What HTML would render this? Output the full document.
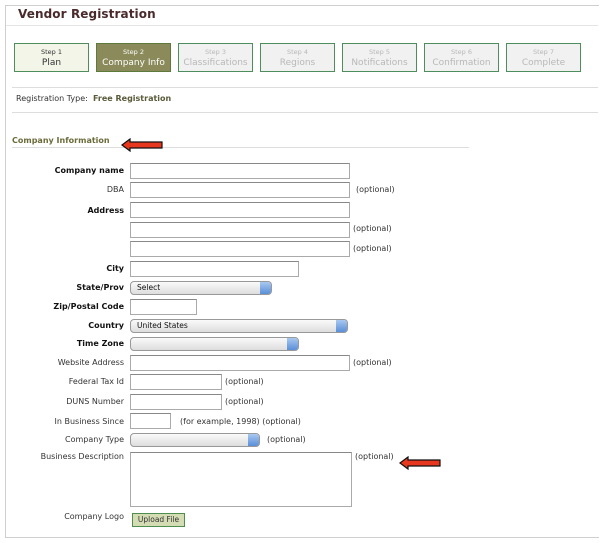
<!DOCTYPE html><html><head><style>
body{margin:0;width:604px;height:543px;background:#fff;font-family:"DejaVu Sans","Liberation Sans",sans-serif;position:relative;overflow:hidden}
.a{position:absolute;white-space:nowrap}
.frame{position:absolute;left:5px;top:5px;width:593px;height:531px;border:1px solid #cfcfcf;border-right:none}
.hl{position:absolute;height:1px;background:#ddd}
.st{position:absolute;top:43px;width:75px;height:29px;border:1px solid #4e8d5c;background:#f1f1f1;color:#b8b8b8;text-align:center;font-size:9px;box-sizing:border-box}
.st .s{font-size:6.5px;margin-top:4px;line-height:9px}
.st .n{line-height:12px}
.lb{position:absolute;right:480px;font-size:8px;color:#333;text-align:right;white-space:nowrap}
.b{font-weight:bold;color:#111}
.in{position:absolute;left:130px;height:16px;border:1px solid #aaa;border-top-color:#888;box-sizing:border-box;background:#fff}
.sel{position:absolute;left:130px;height:14px;border:1px solid #999;border-radius:4px;box-sizing:border-box;background:linear-gradient(#fafafa,#ddd);font-size:7.5px;padding-left:6px;line-height:12px;color:#111}
.sel:after{content:"";position:absolute;right:0;top:0;width:11px;height:12px;background:linear-gradient(#a8c8f0,#5a8fd8);border-radius:0 3px 3px 0}
.op{position:absolute;font-size:8px;color:#333;white-space:nowrap}
</style></head><body>
<div class="frame"></div>
<div class="a" style="left:18px;top:7px;font-size:12px;font-weight:bold;color:#4a2a2a;letter-spacing:0.1px">Vendor Registration</div>
<div class="hl" style="left:6px;top:25px;width:592px;background:#e4e4e4"></div>
<div class="st" style="left:14px;background:#f3f5e9;color:#333"><div class="s">Step 1</div><div class="n">Plan</div></div>
<div class="st" style="left:96px;background:#8a8a5a;color:#fff;border-color:#5d7a3d"><div class="s">Step 2</div><div class="n">Company Info</div></div>
<div class="st" style="left:178px"><div class="s">Step 3</div><div class="n">Classifications</div></div>
<div class="st" style="left:260px"><div class="s">Step 4</div><div class="n">Regions</div></div>
<div class="st" style="left:342px"><div class="s">Step 5</div><div class="n">Notifications</div></div>
<div class="st" style="left:424px"><div class="s">Step 6</div><div class="n">Confirmation</div></div>
<div class="st" style="left:506px"><div class="s">Step 7</div><div class="n">Complete</div></div>
<div class="hl" style="left:12px;top:87px;width:586px"></div>
<div class="a" style="left:16px;top:94px;font-size:8px;color:#333">Registration Type:&nbsp; <b style="color:#5a5a3a">Free Registration</b></div>
<div class="hl" style="left:12px;top:112px;width:586px"></div>
<div class="a" style="left:12px;top:136px;font-size:8px;font-weight:bold;color:#6b6b3b">Company Information</div>
<div class="hl" style="left:12px;top:147px;width:457px"></div>
<svg class="a" style="left:121px;top:138px" width="42" height="14"><path d="M1 7 L9 1 L9 4 L41 4 L41 10 L9 10 L9 13 Z" fill="#e8371f" stroke="#111" stroke-width="1.2"/></svg>
<svg class="a" style="left:399px;top:456px" width="42" height="14"><path d="M1 7 L9 1 L9 4 L41 4 L41 10 L9 10 L9 13 Z" fill="#e8371f" stroke="#111" stroke-width="1.2"/></svg>

<div class="lb b" style="top:166px">Company name</div><div class="in" style="top:163px;width:220px"></div>
<div class="lb" style="top:185px">DBA</div><div class="in" style="top:182px;width:220px"></div><div class="op" style="left:356px;top:185px">(optional)</div>
<div class="lb b" style="top:206px">Address</div><div class="in" style="top:202px;width:220px"></div>
<div class="in" style="top:222px;width:220px"></div><div class="op" style="left:353px;top:224px">(optional)</div>
<div class="in" style="top:241px;width:220px"></div><div class="op" style="left:353px;top:244px">(optional)</div>
<div class="lb b" style="top:264px">City</div><div class="in" style="top:261px;width:169px"></div>
<div class="lb b" style="top:283px">State/Prov</div><div class="sel" style="top:281px;width:142px">Select</div>
<div class="lb b" style="top:302px">Zip/Postal Code</div><div class="in" style="top:299px;width:67px"></div>
<div class="lb b" style="top:321px">Country</div><div class="sel" style="top:319px;width:218px">United States</div>
<div class="lb b" style="top:339px">Time Zone</div><div class="sel" style="top:337px;width:169px"></div>
<div class="lb" style="top:358px">Website Address</div><div class="in" style="top:355px;width:220px"></div><div class="op" style="left:353px;top:358px">(optional)</div>
<div class="lb" style="top:377px">Federal Tax Id</div><div class="in" style="top:374px;width:92px"></div><div class="op" style="left:225px;top:377px">(optional)</div>
<div class="lb" style="top:397px">DUNS Number</div><div class="in" style="top:394px;width:92px"></div><div class="op" style="left:225px;top:397px">(optional)</div>
<div class="lb" style="top:417px">In Business Since</div><div class="in" style="top:413px;width:41px"></div><div class="op" style="left:180px;top:417px">(for example, 1998) (optional)</div>
<div class="lb" style="top:435px">Company Type</div><div class="sel" style="top:433px;width:130px"></div><div class="op" style="left:267px;top:435px">(optional)</div>
<div class="lb" style="top:452px">Business Description</div><div class="in" style="top:452px;width:222px;height:55px"></div><div class="op" style="left:355px;top:452px">(optional)</div>
<div class="lb" style="top:512px">Company Logo</div>
<div class="a" style="left:132px;top:513px;width:53px;height:14px;box-sizing:border-box;border:1px solid #4e8d4e;background:#d4dcb4;font-size:7.5px;line-height:12px;text-align:center;color:#333">Upload File</div>
</body></html>
